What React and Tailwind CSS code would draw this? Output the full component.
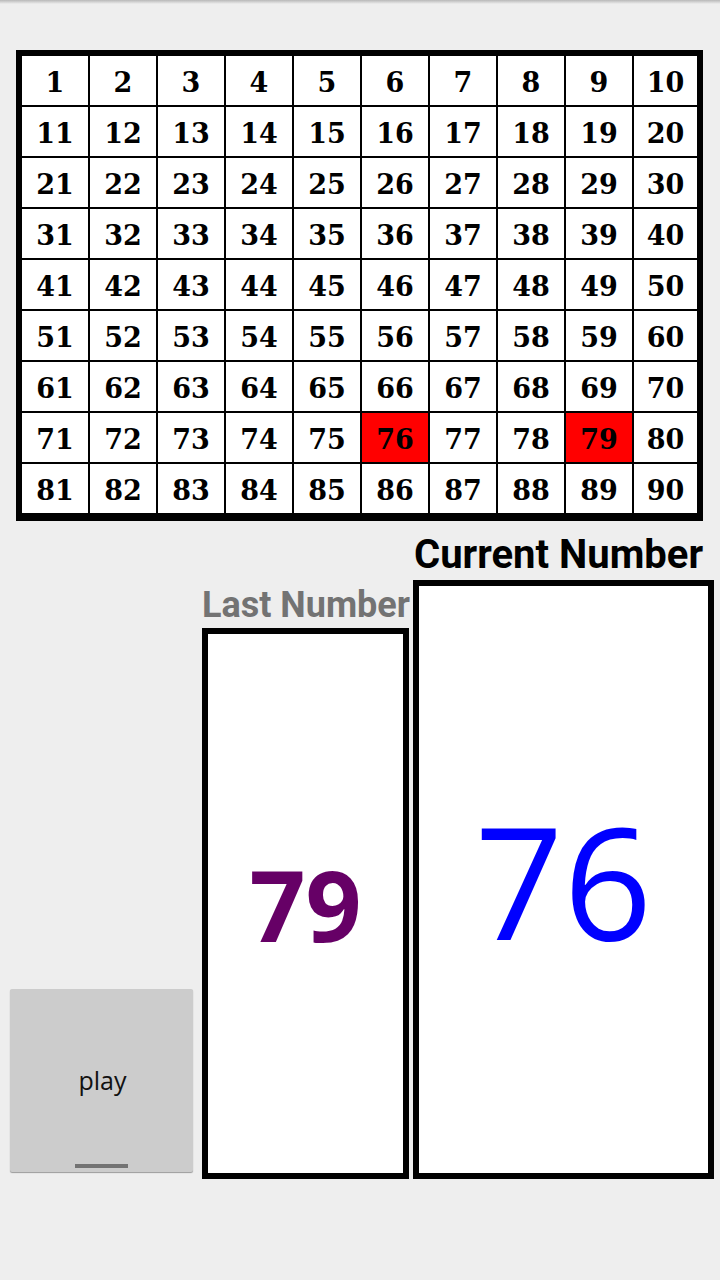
import React from "react";

const HIGHLIGHT = new Set([76, 79]);

export default function App() {
  const nums = Array.from({ length: 90 }, (_, i) => i + 1);
  return (
    <div className="w-[720px] h-[1280px] bg-[#eeeeee] flex flex-col overflow-hidden">
      <div className="h-[4px] w-full bg-gradient-to-b from-[#b8b8b8] to-[#eeeeee]" />
      <div className="mt-[46px] ml-[16px] w-[687px] border-[6px] border-b-[8px] border-black bg-black grid grid-cols-[repeat(9,66px)_1fr] gap-[2px]">
        {nums.map((n) => (
          <div
            key={n}
            className={`h-[49px] flex items-center justify-center pt-[5px] text-[27px] font-bold text-black ${
              HIGHLIGHT.has(n) ? "bg-[#ff0000]" : "bg-white"
            }`}
            style={{ fontFamily: '"DejaVu Serif", serif' }}
          >
            {n}
          </div>
        ))}
      </div>

      <div className="mt-[11px] flex items-end">
        <div className="ml-[10px] mb-[7px] w-[183px] h-[183px] relative bg-[#cccccc] rounded-[2px] shadow-[0_1px_1px_rgba(0,0,0,0.35)] flex items-center justify-center">
          <span
            className="text-[25px] text-[#111111] pl-[2px]"
            style={{ fontFamily: '"Open Sans", sans-serif' }}
          >
            play
          </span>
          <div className="absolute left-[65px] bottom-[4px] w-[53px] h-[4px] bg-[#737373]" />
        </div>

        <div className="ml-[9px] w-[207px] flex flex-col">
          <div
            className="text-[36px] leading-[42px] font-bold text-[#737373] whitespace-nowrap mb-[2px]"
            style={{ fontFamily: 'Roboto, sans-serif' }}
          >
            Last Number
          </div>
          <div className="h-[551px] border-[6px] border-black bg-white flex items-center justify-center">
            <span
              className="text-[98px] font-bold text-[#660066] leading-none"
              style={{ fontFamily: '"Open Sans", sans-serif' }}
            >
              79
            </span>
          </div>
        </div>

        <div className="ml-[4px] w-[301px] flex flex-col">
          <div
            className="text-[40px] leading-[46px] font-bold text-black whitespace-nowrap mb-[2px] pl-[1px]"
            style={{ fontFamily: 'Roboto, sans-serif' }}
          >
            Current Number
          </div>
          <div className="h-[599px] border-[6px] border-black bg-white flex items-center justify-center">
            <span
              className="text-[155px] text-[#0000ff] leading-none"
              style={{ fontFamily: '"Open Sans", sans-serif' }}
            >
              76
            </span>
          </div>
        </div>
      </div>
    </div>
  );
}
